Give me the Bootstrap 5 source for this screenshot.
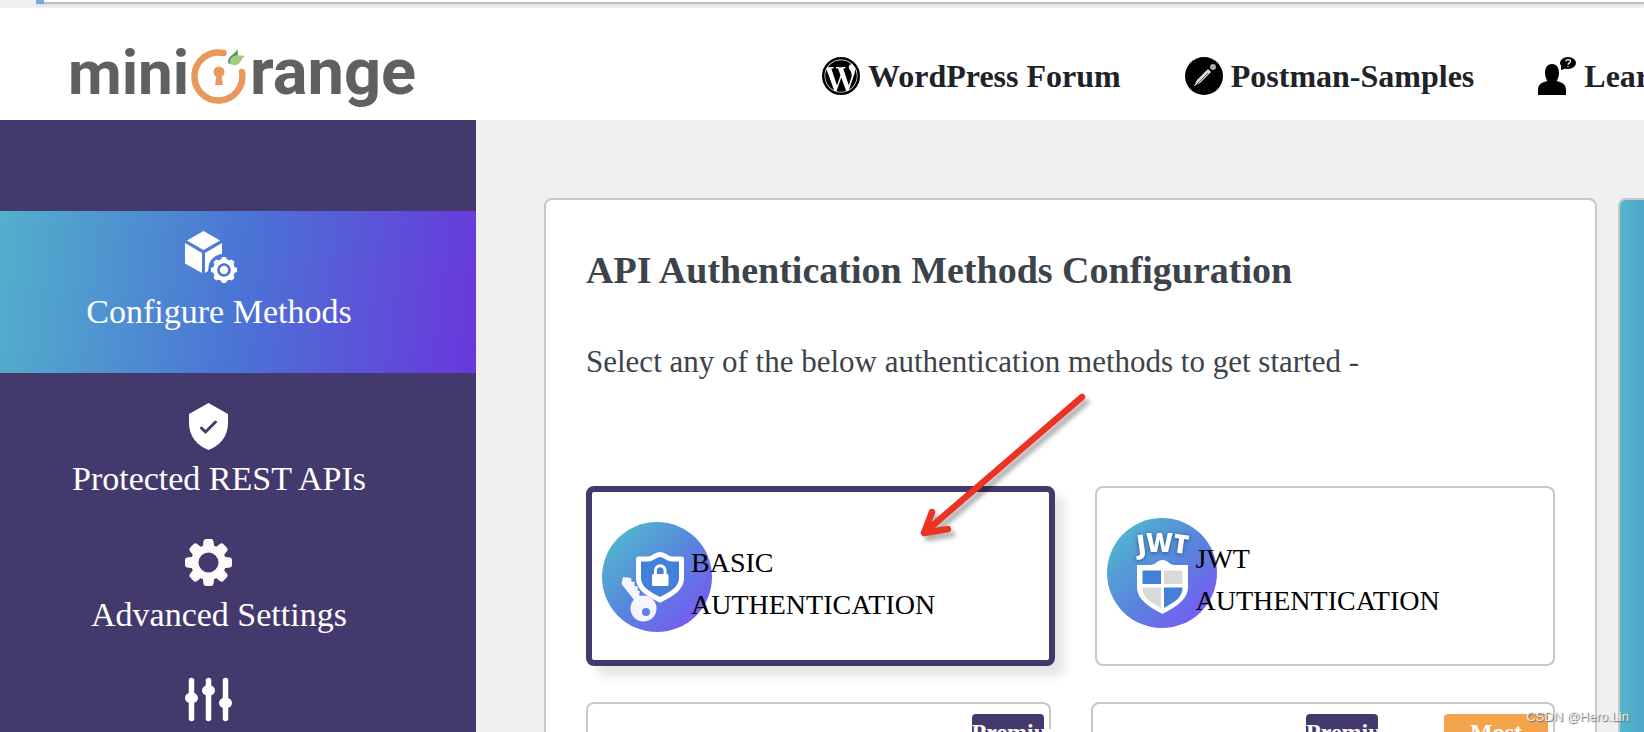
<!DOCTYPE html>
<html lang="en">
<head>
<meta charset="utf-8">
<meta name="viewport" content="width=device-width, initial-scale=1">
<title>miniOrange API Authentication</title>
<link href="https://cdn.jsdelivr.net/npm/bootstrap@5.3.0/dist/css/bootstrap.min.css" rel="stylesheet">
<style>
  body { background: #f0f0f0; font-family: "Liberation Serif", serif; color: #3c434a; }
  .top-strip { height: 8px; padding-left: 36px; background: #f0f0f0; }
  .strip-window { height: 4px; background: #fff; border-bottom: 2px solid #bfbfc8; box-shadow: 0 1px 3px #d8d8d8; }
  .strip-tab { width: 8px; height: 4px; background: #77a6e2; }
  .site-header { height: 112px; padding: 30px 0 0 66px; }
  .site-nav { gap: 64px; margin-left: 402px; padding-top: 15px; }
  .site-nav a { gap: 8px; font-size: 32px; line-height: 46px; font-weight: 700; color: #1d2327; white-space: nowrap; }
  .side-menu { width: 476px; background: #44396c; padding-top: 91px; }
  .side-menu a { padding: 21px 38px 19px 0; color: #fff; font-size: 34px; line-height: 40px; }
  .side-menu svg { margin: 0 22px 9px 0; }
  .side-menu a.current { padding-top: 20px; padding-bottom: 41px; margin-bottom: 9px; background: linear-gradient(97deg, #53b0cb 0%, #4b74d5 50%, #6a37dc 100%); }
  .side-menu a.current svg { margin-right: 16px; }
  .work-area { padding: 78px 0 0 68px; gap: 21px; min-width: 0; }
  .panel { border: 2px solid #c8c8c8; border-radius: 8px; }
  .config-panel { padding: 47px 40px 0; }
  .config-panel h2 { font-size: 38px; line-height: 46px; font-weight: 700; margin-bottom: 46px; }
  .config-panel p { font-size: 31px; line-height: 46px; margin-bottom: 101px; }
  .promo-panel { width: 26px; border-right: 0; border-radius: 8px 0 0 0; background: linear-gradient(90deg, #53b6cb, #4da6cb); }
  .method-row { gap: 40px; margin-bottom: 36px; }
  .method { flex: 1 1 0; height: 180px; padding: 30px 10px 0; background: #fff; border: 2px solid #c8c8c8; border-radius: 8px; color: #000; font-size: 28px; line-height: 42px; }
  .method.chosen { border: 6px solid #44396c; box-shadow: 10px 10px 10px rgba(0,0,0,.1); }
  .method > svg { margin-right: -21px; }
  .method > span { padding-top: 20px; z-index: 1; }
  .method.tagged { padding: 10px 5px 0; gap: 66px; }
  .method .tag { width: 72px; height: 66px; padding-top: 3px; border-radius: 4px; background: #44396c; color: #fff; font-size: 24px; line-height: 30px; font-weight: 700; }
  .method .tag.popular { width: 104px; background: #f2a44d; text-align: center; }
  .method .pointer { right: -46px; top: -110px; margin: 0; pointer-events: none; z-index: 2; filter: drop-shadow(4px 5px 2px rgba(0,0,0,.3)); }
  .watermark { right: 15px; bottom: 6px; font: 13px/18px "Liberation Sans", sans-serif; color: #eee; text-shadow: 1px 1px 1px #666; }
</style>
<script src="https://cdn.jsdelivr.net/npm/bootstrap@5.3.0/dist/js/bootstrap.bundle.min.js"></script>
</head>
<body class="vh-100 overflow-hidden d-flex flex-column position-relative">

<div class="top-strip flex-shrink-0"><div class="strip-window"><div class="strip-tab"></div></div></div>

<header class="site-header bg-white d-flex flex-shrink-0 align-items-start overflow-hidden">
  <a href="#" class="flex-shrink-0" aria-label="miniOrange">
    <svg class="d-block" width="354" height="80" viewBox="-4 0 354 80">
      <g font-family="Roboto, sans-serif" font-weight="700" fill="#5f6062">
        <text x="-2" y="56" font-size="62">mini</text>
        <text x="180" y="56" font-size="65">range</text>
      </g>
      <path d="M153.500 15A24 24 0 1 0 172 34" fill="none" stroke="#e9985b" stroke-width="6.500" stroke-linecap="round"/>
      <circle cx="149" cy="34" r="5.500" fill="#e9985b"/>
      <path d="M147 35h4l2 12h-8z" fill="#e9985b"/>
      <path d="M159 26c-4-7 7-10 8-15 2 5 1 9-3 13z" fill="#5a9a6c"/>
      <path d="M160 26c-1-8 6-10 15-8-5 3-4 12-15 8z" fill="#9fcb7d"/>
    </svg>
  </a>
  <nav class="site-nav d-flex">
    <a href="#" class="d-flex align-items-center text-decoration-none">
      <svg width="38" height="38" viewBox="0 0 24 24" aria-hidden="true"><circle cx="12" cy="12" r="11.200" fill="none" stroke="#000" stroke-width="1.600"/><path transform="translate(.9 .9) scale(.925)" d="M21.469 6.825c.84 1.537 1.318 3.300 1.318 5.175 0 3.979-2.156 7.456-5.363 9.325l3.295-9.527c.615-1.540.820-2.771.820-3.864 0-.405-.026-.780-.070-1.110m-7.981.105c.647-.030 1.232-.105 1.232-.105.582-.075.514-.930-.067-.899 0 0-1.755.135-2.880.135-1.064 0-2.850-.150-2.850-.150-.585-.030-.661.855-.075.885 0 0 .540.061 1.125.090l1.680 4.605-2.370 7.080L5.354 6.900c.649-.030 1.234-.100 1.234-.100.585-.075.516-.930-.065-.896 0 0-1.746.138-2.874.138-.200 0-.438-.008-.690-.015C4.911 3.150 8.235 1.215 12 1.215c2.809 0 5.365 1.072 7.286 2.833-.046-.003-.091-.009-.141-.009-1.060 0-1.812.923-1.812 1.914 0 .890.513 1.643 1.060 2.531.411.720.890 1.643.890 2.977 0 .915-.354 1.994-.821 3.479l-1.075 3.585-3.900-11.610zM12 22.784c-1.059 0-2.081-.153-3.048-.437l3.237-9.406 3.315 9.087c.024.053.050.101.078.149-1.120.393-2.325.609-3.582.609M1.211 12c0-1.564.336-3.050.935-4.390L7.290 21.709C3.694 19.960 1.212 16.271 1.211 12"/></svg>
      <span>WordPress Forum</span>
    </a>
    <a href="#" class="d-flex align-items-center text-decoration-none">
      <svg width="38" height="38" viewBox="0 0 38 38" aria-hidden="true"><circle cx="19" cy="19" r="19"/><path d="M9 29l3-6 11-11 3 3-11 11z" fill="#ddd"/><circle cx="28" cy="10" r="3" fill="#aaa"/><path d="M10 29l13-13" stroke="#555"/></svg>
      <span>Postman-Samples</span>
    </a>
    <a href="#" class="d-flex align-items-center text-decoration-none">
      <svg width="38" height="38" viewBox="0 0 38 38" aria-hidden="true"><path d="M0 38v-5c0-6 4-8 10-9l4 4 4-4c6 1 10 3 10 9v5z"/><path d="M7 16c0-6 3-9 7-9s7 3 7 9c0 4-2 7-3 10-1 3-7 3-8 0-1-3-3-6-3-10z"/><ellipse cx="30" cy="6" rx="8" ry="6"/><path d="M23 8v5l6-2z"/><path d="M27.500 4.500c.5-2.500 5-2.500 5 0 0 1.500-2.500 1.500-2.500 3.200M30 9v1" fill="none" stroke="#fff" stroke-width="1.200"/></svg>
      <span>Learn</span>
    </a>
  </nav>
</header>

<div class="d-flex flex-grow-1">
  <nav class="side-menu flex-shrink-0">
    <a href="#" class="current d-flex flex-column align-items-center text-decoration-none">
      <svg width="52" height="52" viewBox="0 0 52 52" fill="#fff" aria-hidden="true">
        <path d="M18.500 0L35 9.500 18.500 19 2 9.500zM0 12l17 10v20L0 32.500zM20 22l17-10v11c-8 1-12 7-13 10l-1 7-3 2z"/>
        <circle cx="39" cy="39" r="11"/>
        <g id="cogs"><path id="cog" d="M36 29l1-3h4l1 3zM36 49l1 3h4l1-3z"/><use href="#cog" transform="rotate(90 39 39)"/></g><use href="#cogs" transform="rotate(45 39 39)"/>
        <circle cx="39" cy="39" r="5.500" fill="none" stroke="#4b72d5" stroke-width="2.600"/>
      </svg>
      <span>Configure Methods</span>
    </a>
    <a href="#" class="d-flex flex-column align-items-center text-decoration-none">
      <svg width="47" height="47" viewBox="0 0 47 47" aria-hidden="true"><path d="M23.500 0L43 11v9c0 14-9 23-19.500 27C13 43 4 34 4 20v-9z" fill="#fff"/><path d="M16.500 25l4 4 10-10" fill="none" stroke="#44396c" stroke-width="3" stroke-linecap="round"/></svg>
      <span>Protected REST APIs</span>
    </a>
    <a href="#" class="d-flex flex-column align-items-center text-decoration-none">
      <svg width="47" height="47" viewBox="0 0 47 47" aria-hidden="true">
        <g fill="#fffafa"><circle cx="23.500" cy="23.500" r="17.500"/>
          <g id="teeth"><path id="tooth" d="M17.500 10l1-8q.4-2 2.500-2h5q2.100 0 2.500 2l1 8zM17.500 37l1 8q.4 2 2.500 2h5q2.100 0 2.500-2l1-8z"/><use href="#tooth" transform="rotate(90 23.500 23.500)"/></g>
          <use href="#teeth" transform="rotate(45 23.500 23.500)"/></g>
        <circle cx="23.500" cy="23.500" r="10" fill="#44396c"/>
      </svg>
      <span>Advanced Settings</span>
    </a>
    <a href="#" class="d-flex flex-column align-items-center text-decoration-none">
      <svg width="47" height="47" viewBox="0 0 47 47" aria-hidden="true"><path d="M6.500 5.500v38M23.500 5.500v38M40.500 5.500v38" stroke="#fff" stroke-width="5.500" stroke-linecap="round"/><g fill="#fff"><rect y="18" width="13" height="10" rx="5"/><rect x="17" y="10.500" width="13" height="10" rx="5"/><rect x="34" y="23" width="13" height="10" rx="5"/></g></svg>
    </a>
  </nav>

  <main class="work-area d-flex flex-grow-1">
    <section class="panel config-panel bg-white flex-grow-1">
      <h2>API Authentication Methods Configuration</h2>
      <p>Select any of the below authentication methods to get started -</p>

      <div class="method-row d-flex">
        <button type="button" class="method chosen d-flex align-items-start text-start position-relative">
          <svg class="flex-shrink-0" width="110" height="110" viewBox="0 0 110 110" aria-hidden="true">
            <defs><linearGradient id="disc" x1=".1" y1=".15" x2=".85" y2=".9"><stop offset="0" stop-color="#51b4cf"/><stop offset=".5" stop-color="#5885de"/><stop offset="1" stop-color="#755cf0"/></linearGradient></defs>
            <circle cx="55" cy="55" r="55" fill="url(#disc)"/>
            <path d="M36.500 37h10c5 0 6-4.500 11.500-4.500S64.500 37 69.500 37h10v19c0 12-13 17-21.500 22-8.500-5-21.500-10-21.500-22z" fill="#4280da" stroke="#fff" stroke-width="5" stroke-linejoin="round"/>
            <rect x="50" y="52" width="16.500" height="12" rx="1.500" fill="#fff"/><path d="M53.500 53v-4.500a4.800 4.800 0 0 1 9.600 0V53" fill="none" stroke="#fff" stroke-width="3"/>
            <path d="M21 55l8 1 .5 3.500 3 .5 0 4 3.500.5-.5 4 2.500 1-1 3 5 6-8 2L19.500 62z" fill="#f5f4ff"/>
            <circle cx="41.500" cy="86.500" r="13" fill="#f5f4ff"/><circle cx="44" cy="90" r="4" fill="#5f7fe3"/>
          </svg>
          <span>BASIC<br>AUTHENTICATION</span>
          <svg class="pointer position-absolute" width="180" height="160" viewBox="0 0 180 160" aria-hidden="true"><path d="M167 15L9 151M17 130L9 151l24-4" fill="none" stroke="#ec3323" stroke-width="6.500" stroke-linecap="round" stroke-linejoin="round"/></svg>
        </button>
        <button type="button" class="method d-flex align-items-start text-start">
          <svg class="flex-shrink-0" width="110" height="110" viewBox="0 0 110 110" aria-hidden="true">
            <circle cx="55" cy="55" r="55" fill="url(#disc)"/>
            <path d="M30 47h13c6 0 7-5 12.500-5S62 47 68 47h13v22c0 14-15 21-25.500 27C45 90 30 83 30 69z" fill="#fff"/>
            <path d="M35.500 52.500H54V66H35.500z" fill="#4280da"/><path d="M57 52.500h18.500V66H57zM35.500 69.500H54V90c-8-5-18.500-9-18.500-20.500z" fill="#d9d9d9"/><path d="M57 69.500h18.500C75.500 81 65 85 57 90z" fill="#4280da"/>
            <g font-family="Open Sans, sans-serif" font-size="26" font-weight="800" fill="#fff" style="filter:drop-shadow(0 1px 2px #2a5590)"><text x="31" y="36" transform="rotate(-8 31 36)">J</text><text x="39" y="34">W</text><text x="65" y="34" transform="rotate(8 65 34)">T</text></g>
          </svg>
          <span>JWT<br>AUTHENTICATION</span>
        </button>
      </div>

      <div class="method-row d-flex">
        <button type="button" class="method tagged d-flex align-items-start justify-content-end text-start">
          <b class="tag">Premium</b>
        </button>
        <button type="button" class="method tagged d-flex align-items-start justify-content-end text-start">
          <b class="tag">Premium</b><b class="tag popular">Most Popular</b>
        </button>
      </div>
    </section>
    <aside class="panel promo-panel flex-shrink-0"></aside>
  </main>
</div>

<div class="watermark position-absolute">CSDN @Hero.Lin</div>
</body>
</html>
